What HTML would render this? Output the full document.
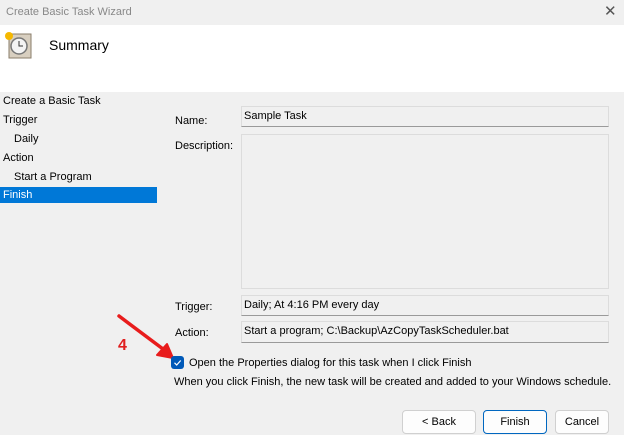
<!DOCTYPE html><html><head><style>
body{margin:0;width:624px;height:435px;background:#f0f0f0;font-family:"Liberation Sans",sans-serif;font-size:11px;color:#000;position:relative;overflow:hidden}
.a{position:absolute;white-space:nowrap}
.box{position:absolute;background:#f0f0f0;border:1px solid #dcdcdc;border-bottom-color:#9a9a9a;box-sizing:border-box;padding:3px 0 0 2px}
.btn{position:absolute;top:410px;height:24px;background:#fdfdfd;border:1px solid #d0d0d0;border-radius:4px;box-sizing:border-box;text-align:center;line-height:22px;font-size:11px}
</style></head><body>
<div class="a" style="left:6px;top:6px;color:#888;font-size:11px">Create Basic Task Wizard</div>
<div class="a" style="left:604px;top:2px;color:#555;font-size:15px">✕</div>
<div class="a" style="left:0;top:25px;width:624px;height:67px;background:#fff"></div>
<svg class="a" style="left:2px;top:29px" width="30" height="32"><rect x="7" y="5" width="22" height="24" fill="#d8cfc0" stroke="#8a7d6a"/><circle cx="17" cy="17" r="8" fill="#f4f4f4" stroke="#777" stroke-width="1.5"/><path d="M17 12v5h4" stroke="#333" fill="none"/><circle cx="7" cy="7" r="4" fill="#f5b800"/></svg>
<div class="a" style="left:49px;top:37px;font-size:14px">Summary</div>
<div class="a" style="left:3px;top:95px">Create a Basic Task</div>
<div class="a" style="left:3px;top:114px">Trigger</div>
<div class="a" style="left:14px;top:133px">Daily</div>
<div class="a" style="left:3px;top:152px">Action</div>
<div class="a" style="left:14px;top:171px">Start a Program</div>
<div class="a" style="left:0;top:187px;width:157px;height:16px;background:#0078d7"></div>
<div class="a" style="left:3px;top:189px;color:#fff">Finish</div>
<div class="a" style="left:175px;top:115px">Name:</div>
<div class="a" style="left:175px;top:140px">Description:</div>
<div class="box" style="left:241px;top:106px;width:368px;height:21px">Sample Task</div>
<div class="box" style="left:241px;top:134px;width:368px;height:155px;border-bottom-color:#dcdcdc"></div>
<div class="a" style="left:175px;top:301px">Trigger:</div>
<div class="a" style="left:175px;top:327px">Action:</div>
<div class="box" style="left:241px;top:295px;width:368px;height:21px">Daily; At 4:16 PM every day</div>
<div class="box" style="left:241px;top:321px;width:368px;height:22px">Start a program; C:\Backup\AzCopyTaskScheduler.bat</div>
<svg class="a" style="left:115px;top:312px" width="65" height="50"><path d="M4 4L52 40" stroke="#e81c1c" stroke-width="3.5" stroke-linecap="round"/><path d="M58 46L42 43L52 32Z" fill="#e81c1c" stroke="#e81c1c" stroke-width="2" stroke-linejoin="round"/></svg>
<div class="a" style="left:118px;top:337px;color:#e02020;font-weight:bold;font-size:16px">4</div>
<div class="a" style="left:171px;top:356px;width:13px;height:13px;background:#0059b8;border-radius:3px"></div>
<svg class="a" style="left:171px;top:356px" width="13" height="13"><path d="M3.5 6.8l2.2 2.2 4-4.5" stroke="#fff" stroke-width="1.2" fill="none"/></svg>
<div class="a" style="left:189px;top:357px">Open the Properties dialog for this task when I click Finish</div>
<div class="a" style="left:174px;top:376px">When you click Finish, the new task will be created and added to your Windows schedule.</div>
<div class="btn" style="left:402px;width:74px">&lt; Back</div>
<div class="btn" style="left:483px;width:64px;border:1px solid #0067c0">Finish</div>
<div class="btn" style="left:555px;width:54px">Cancel</div>
</body></html>
